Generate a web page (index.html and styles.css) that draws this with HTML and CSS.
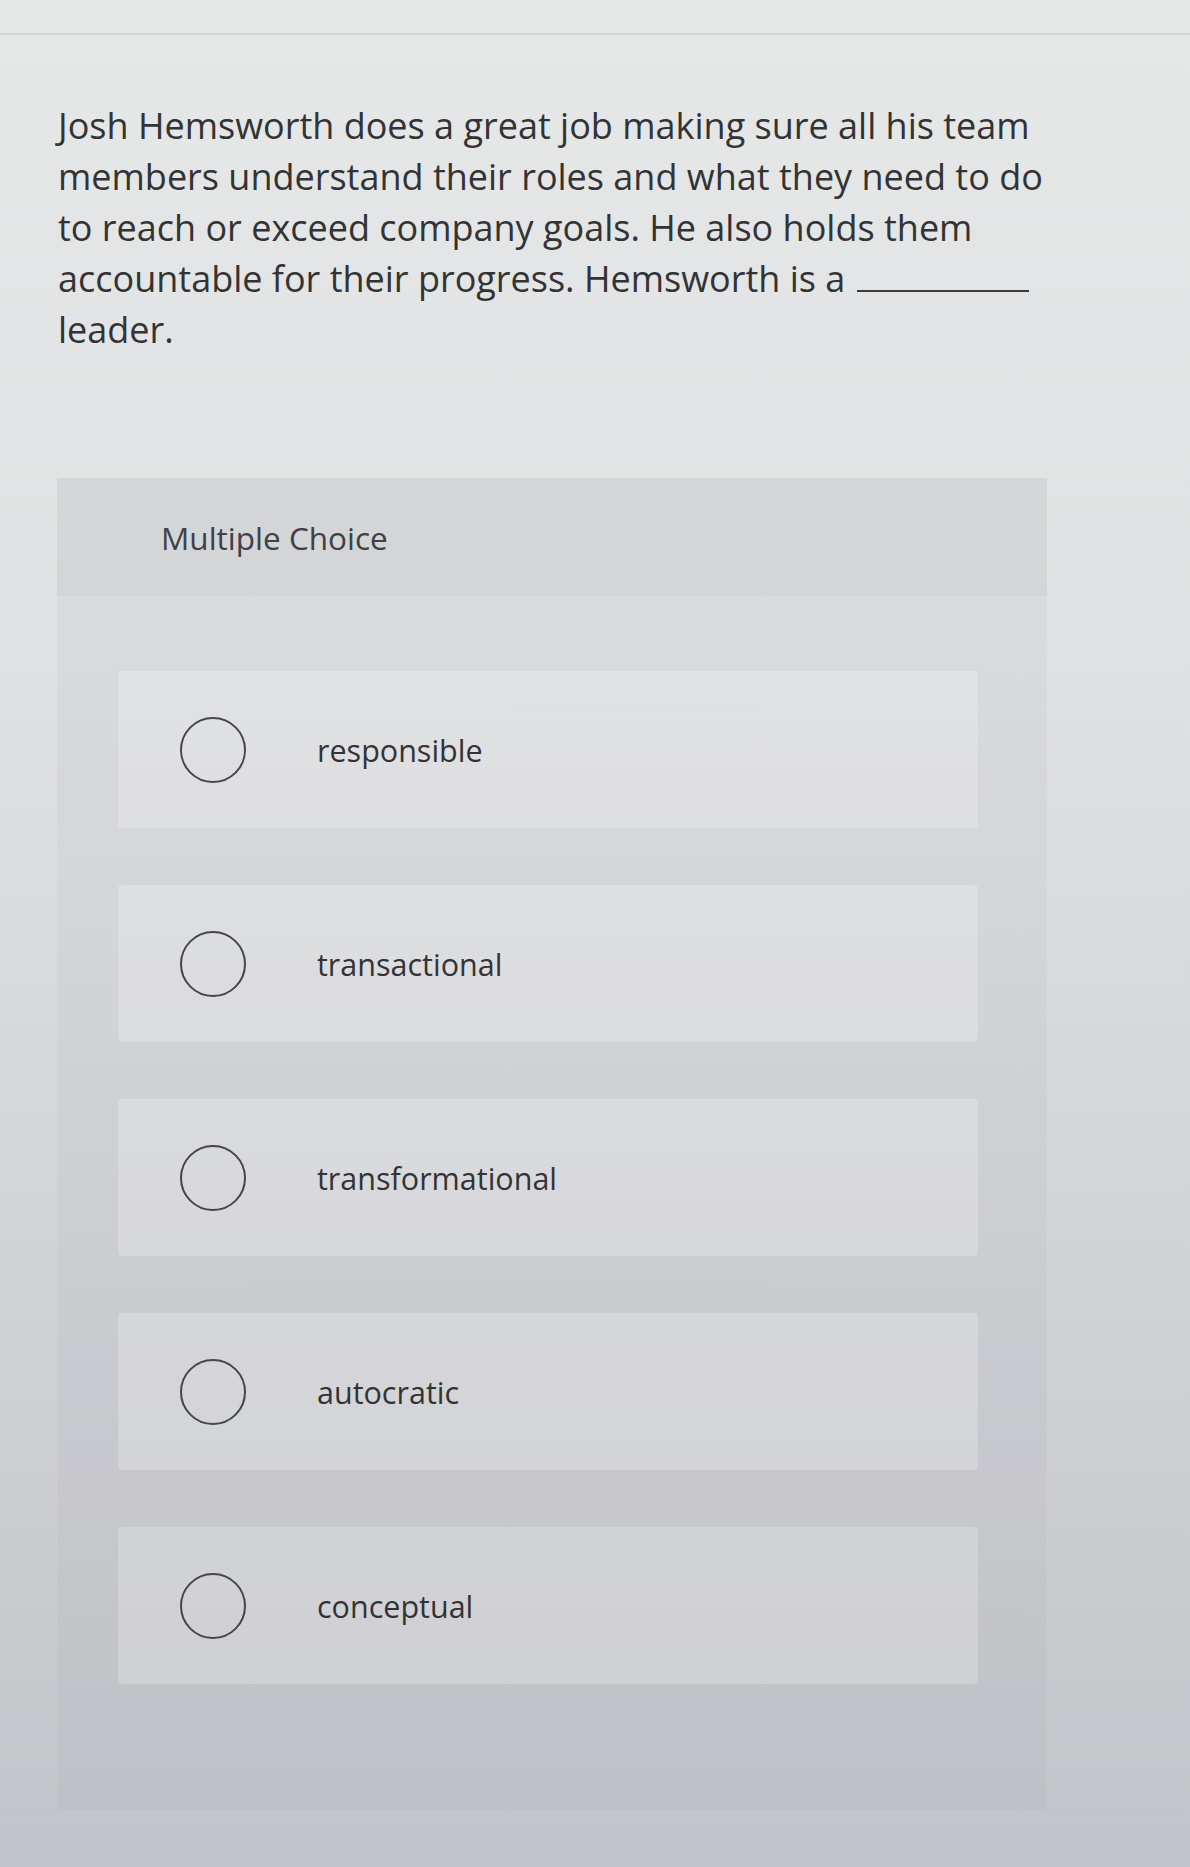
FILE: index.html
```html
<!DOCTYPE html>
<html lang="en">
<head>
  <meta charset="UTF-8" />
  <meta name="viewport" content="width=device-width, initial-scale=1.0"/>
  <title>Multiple Choice</title>
  <link rel="stylesheet" href="styles.css">
</head>
<body>
  <div class="topbar"></div>

  <p class="question">
    Josh Hemsworth does a great job making sure all his team members understand their roles and what they need to do to reach or exceed company goals. He also holds them accountable for their progress. Hemsworth is a <span class="blank"></span> leader.
  </p>

  <div class="mc-box">
    <div class="mc-header">Multiple Choice</div>
    <div class="mc-options">
      <label class="option"><span class="radio"></span><span class="option-text">responsible</span></label>
      <label class="option"><span class="radio"></span><span class="option-text">transactional</span></label>
      <label class="option"><span class="radio"></span><span class="option-text">transformational</span></label>
      <label class="option"><span class="radio"></span><span class="option-text">autocratic</span></label>
      <label class="option"><span class="radio"></span><span class="option-text">conceptual</span></label>
    </div>
  </div>
</body>
</html>
```

FILE: styles.css
```css
html {
  height: 100%;
}

body {
  margin: 0;
  min-height: 1867px;
  font-family: "Open Sans", Lato, sans-serif;
  color: #333335;
  background: linear-gradient(180deg, #e6e8e8 0%, #dfe1e2 35%, #d3d4d7 65%, #c3c4c9 100%);
}

.topbar {
  height: 33px;
  border-bottom: 2px solid #d4d6d7;
}

.question {
  width: 1000px;
  margin: 65px 0 0 58px;
  font-size: 36px;
  line-height: 51px;
  color: #333335;
}

.blank {
  display: inline-block;
  width: 172px;
  border-bottom: 2px solid #3b3b3d;
  margin-left: 2px;
}

.mc-box {
  width: 990px;
  margin: 123px 0 0 57px;
  background: rgba(120, 124, 130, 0.06);
}

.mc-header {
  height: 118px;
  display: flex;
  align-items: center;
  padding-left: 104px;
  font-size: 31.5px;
  color: #414145;
  background: rgba(110, 114, 120, 0.05);
}

.mc-options {
  display: flex;
  flex-direction: column;
  gap: 57px;
  padding: 75px 69px 127px 61px;
}

.option {
  height: 157px;
  display: flex;
  align-items: center;
  padding-left: 62px;
  background: rgba(255, 255, 255, 0.22);
  border-radius: 4px;
  cursor: pointer;
}

.radio {
  width: 62px;
  height: 62px;
  border: 2.5px solid #45444f;
  border-radius: 50%;
  flex-shrink: 0;
}

.option-text {
  margin-left: 71px;
  font-size: 30.5px;
  color: #333335;
}
```
